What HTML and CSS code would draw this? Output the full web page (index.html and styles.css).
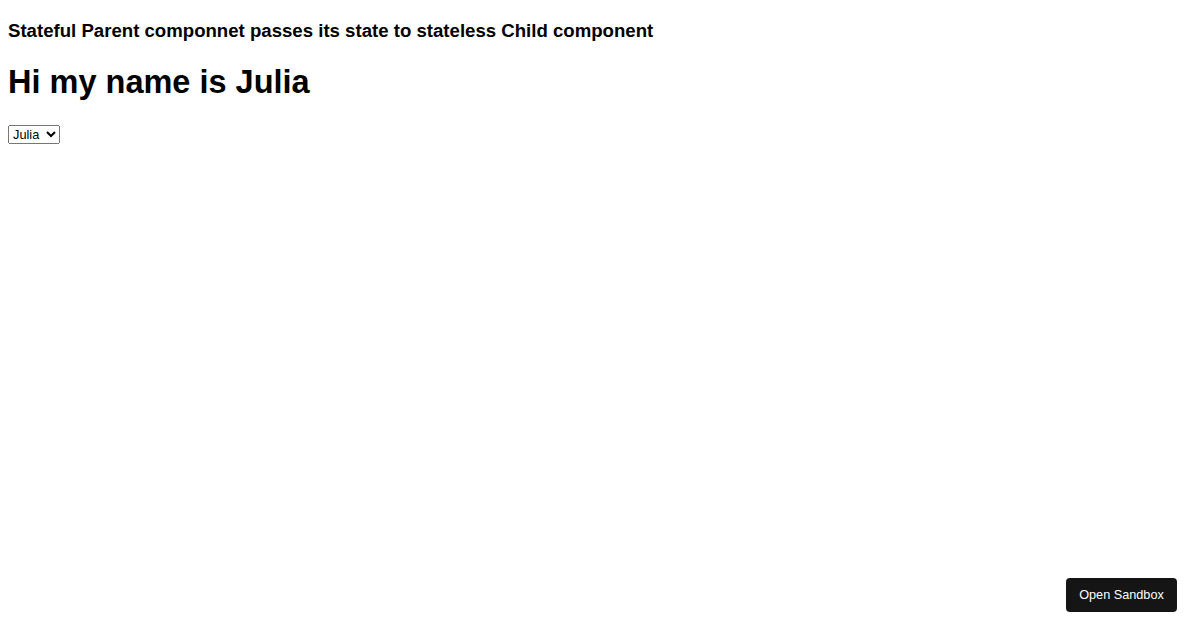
FILE: index.html
```html
<!DOCTYPE html>
<html>
<head>
<meta charset="utf-8">
<link rel="stylesheet" href="styles.css">
</head>
<body class="page">
  <div class="app">
    <h3 class="subtitle">Stateful Parent componnet passes its state to stateless Child component</h3>
    <h1 class="title">Hi my name is Julia</h1>
    <select class="name-select">
      <option>Julia</option>
      <option>Anna</option>
    </select>
  </div>
  <a class="sandbox-btn">Open Sandbox</a>
</body>
</html>
```

FILE: styles.css
```css
html, body {
  background: #fff;
}
.page {
  margin: 0;
  font-family: "Liberation Sans", Arial, sans-serif;
  color: #000;
}
.app {
  display: flex;
  flex-direction: column;
  align-items: flex-start;
  padding: 19.5px 8px 0;
}
.subtitle {
  font-size: 18.63px;
  line-height: 22px;
  font-weight: bold;
  margin: 0;
}
.title {
  font-size: 32.5px;
  line-height: 37px;
  font-weight: bold;
  margin: 22px 0 0;
}
.name-select {
  margin-top: 24px;
  font-family: "Liberation Sans", Arial, sans-serif;
  font-size: 12.8px;
  height: 19px;
}
.sandbox-btn {
  position: fixed;
  right: 23px;
  bottom: 18px;
  width: 111px;
  height: 34px;
  box-sizing: border-box;
  display: flex;
  align-items: center;
  justify-content: center;
  background: #151515;
  color: #fff;
  border-radius: 4px;
  font-family: "Liberation Sans", Arial, sans-serif;
  font-size: 12.7px;
}
```
